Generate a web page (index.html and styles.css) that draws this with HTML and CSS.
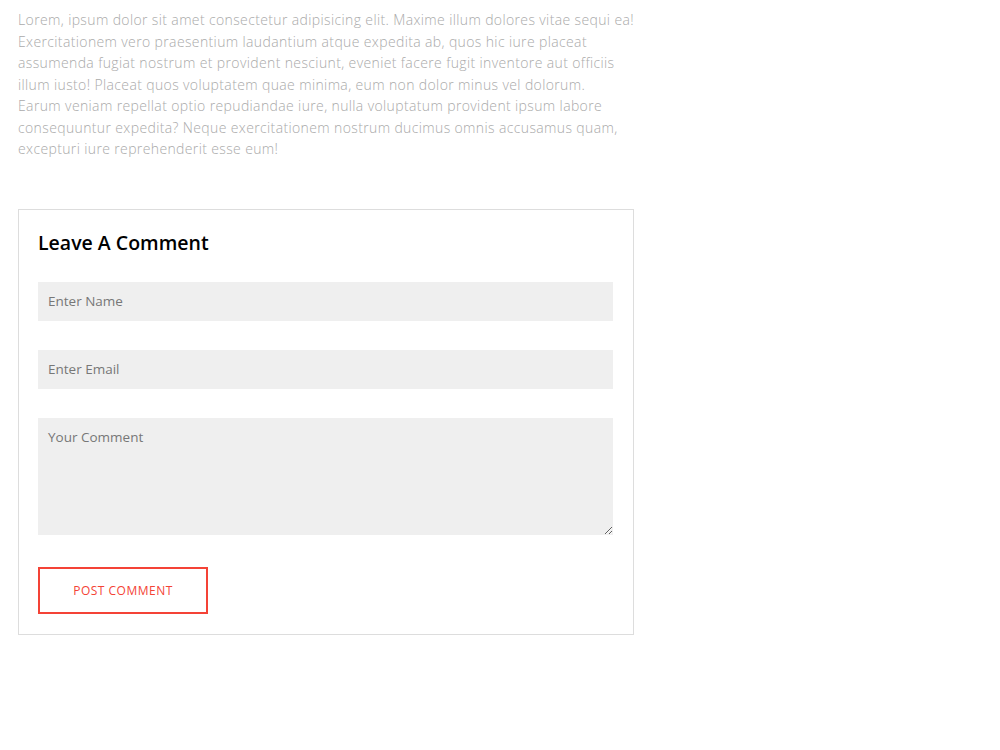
FILE: index.html
```html
<!DOCTYPE html>
<html lang="en">
<head>
    <meta charset="UTF-8">
    <meta name="viewport" content="width=device-width, initial-scale=1.0">
    <title>Blog Post</title>
    <link rel="stylesheet" href="styles.css">
</head>
<body>
    <div class="post">
        <p class="post-text">Lorem, ipsum dolor sit amet consectetur adipisicing elit. Maxime illum dolores vitae sequi ea! Exercitationem vero praesentium laudantium atque expedita ab, quos hic iure placeat assumenda fugiat nostrum et provident nesciunt, eveniet facere fugit inventore aut officiis illum iusto! Placeat quos voluptatem quae minima, eum non dolor minus vel dolorum.<br>Earum veniam repellat optio repudiandae iure, nulla voluptatum provident ipsum labore consequuntur expedita? Neque exercitationem nostrum ducimus omnis accusamus quam, excepturi iure reprehenderit esse eum!</p>

        <div class="comment-box">
            <h3>Leave A Comment</h3>
            <form class="comment-form">
                <input type="text" class="field" placeholder="Enter Name">
                <input type="email" class="field" placeholder="Enter Email">
                <textarea class="field field-area" placeholder="Your Comment"></textarea>
                <button type="button" class="post-btn">POST COMMENT</button>
            </form>
        </div>
    </div>
</body>
</html>
```

FILE: styles.css
```css
body {
    margin: 0;
    font-family: "Open Sans", Arial, sans-serif;
    background-color: #fff;
}
.post {
    width: 616px;
    padding: 9px 18px;
}
.post-text {
    margin: 0 0 49px;
    font-size: 14px;
    font-weight: 300;
    letter-spacing: 0.37px;
    line-height: 21.5px;
    color: #aaa;
}
.comment-box {
    border: 1px solid #ddd;
    padding: 20px 20px 20px 19px;
}
.comment-box h3 {
    margin: 0 0 26px;
    font-size: 19.5px;
    font-weight: 600;
    line-height: 26px;
    color: #000;
}
.comment-form {
    display: flex;
    flex-direction: column;
    align-items: flex-start;
    gap: 29px;
}
.field {
    box-sizing: border-box;
    width: 100%;
    height: 39px;
    padding: 0 10px;
    border: none;
    background-color: #efefef;
    font-family: inherit;
    font-size: 13.5px;
    color: #555;
    outline: none;
}
.field::placeholder {
    color: #777;
}
.field-area {
    height: 117px;
    padding: 10px;
    resize: vertical;
}
.post-btn {
    margin-top: 3px;
    width: 170px;
    height: 47px;
    border: 2px solid #f44336;
    background-color: #fff;
    color: #f44336;
    font-family: inherit;
    font-size: 12px;
    font-weight: 400;
    letter-spacing: 0.5px;
    cursor: pointer;
}
```
